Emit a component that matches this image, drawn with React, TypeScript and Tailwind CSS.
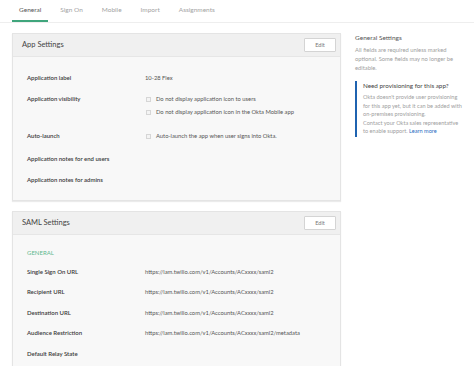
import React from "react";

const Row = ({ label, children, mt }: { label: string; children?: React.ReactNode; mt: string }) => (
  <div className={`flex ${mt}`}>
    <div className="w-[118px] shrink-0 font-semibold text-[#3a3a3a] leading-[10px]">{label}</div>
    <div className="flex flex-col text-[#555] leading-[10px] text-[5.8px]">{children}</div>
  </div>
);

const Check = ({ text, cls = "" }: { text: string; cls?: string }) => (
  <div className={`flex items-center ${cls}`}>
    <span className="w-[5px] h-[5px] border border-[#d6d6d6] bg-[#f4f4f4] mr-[5px] ml-[1px]" />
    <span>{text}</span>
  </div>
);

const Panel = ({ title, children }: { title: string; children: React.ReactNode }) => (
  <div className="border border-[#e4e4e4] bg-[#f8f8f8] shadow-[0_1px_1px_rgba(0,0,0,0.08)]">
    <div className="h-[23px] bg-[#f0f0f0] border-b border-[#e6e6e6] flex items-center justify-between pl-[9px] pr-[4px]">
      <span className="text-[7.5px] text-[#444]">{title}</span>
      <button className="w-[32px] h-[14px] bg-white border border-[#d4d4d4] text-[5.5px] text-[#777] rounded-[1px]">Edit</button>
    </div>
    {children}
  </div>
);

export default function App() {
  const tabs = ["General", "Sign On", "Mobile", "Import", "Assignments"];
  const provLines = [
    "Okta doesn't provide user provisioning",
    "for this app yet, but it can be added with",
    "on-premises provisioning.",
    "Contact your Okta sales representative",
  ];
  return (
    <div className="w-[474px] h-[366px] overflow-hidden bg-white" style={{ fontFamily: "Lato, 'Open Sans', sans-serif" }}>
      <div className="h-[23px] border-b border-[#eeeeee] flex pl-[12px] gap-[5px]">
        {tabs.map((t, i) => (
          <div
            key={t}
            className={`px-[7px] pt-[6px] text-[6.5px] leading-[8px] ${i === 0 ? "text-[#555] border-b-2 border-[#3fa57c]" : "text-[#a3a3a3]"}`}
          >
            {t}
          </div>
        ))}
      </div>
      <div className="flex pl-[12px] pt-[10px] gap-[14px]">
        <div className="w-[329px] shrink-0 flex flex-col gap-[10px]">
          <Panel title="App Settings">
            <div className="px-[14px] pt-[16px] pb-[15px] text-[6px]">
              <Row label="Application label" mt="">
                <span>10-28 Flex</span>
              </Row>
              <Row label="Application visibility" mt="mt-[11px]">
                <Check text="Do not display application icon to users" />
                <Check text="Do not display application icon in the Okta Mobile app" cls="mt-[3px]" />
              </Row>
              <Row label="Auto-launch" mt="mt-[14px]">
                <Check text="Auto-launch the app when user signs into Okta." />
              </Row>
              <Row label="Application notes for end users" mt="mt-[13px]" />
              <Row label="Application notes for admins" mt="mt-[11px]" />
            </div>
          </Panel>
          <Panel title="SAML Settings">
            <div className="px-[14px] pt-[13px] pb-[20px] text-[6px]">
              <div className="text-[#5fb88f] leading-[10px]">GENERAL</div>
              <Row label="Single Sign On URL" mt="mt-[9px]">
                <span>https://iam.twilio.com/v1/Accounts/ACxxxx/saml2</span>
              </Row>
              <Row label="Recipient URL" mt="mt-[10.4px]">
                <span>https://iam.twilio.com/v1/Accounts/ACxxxx/saml2</span>
              </Row>
              <Row label="Destination URL" mt="mt-[10.4px]">
                <span>https://iam.twilio.com/v1/Accounts/ACxxxx/saml2</span>
              </Row>
              <Row label="Audience Restriction" mt="mt-[10.4px]">
                <span>https://iam.twilio.com/v1/Accounts/ACxxxx/saml2/metadata</span>
              </Row>
              <Row label="Default Relay State" mt="mt-[10.4px]" />
            </div>
          </Panel>
        </div>
        <div className="w-[112px] shrink-0">
          <div className="text-[6.5px] text-[#555] leading-[9px]">General Settings</div>
          <div className="w-[100px] mt-[3px] text-[5.8px] text-[#a0a0a0] leading-[9px]">
            All fields are required unless marked optional. Some fields may no longer be editable.
          </div>
          <div className="mt-[9px] border-l-2 border-[#1f63b0] pl-[6px] py-[1px]">
            <div className="text-[6.3px] text-[#444] leading-[8px]">Need provisioning for this app?</div>
            <div className="mt-[3px] text-[5.6px] text-[#a0a0a0] leading-[8.5px]">
              {provLines.map((l) => (
                <div key={l} className="whitespace-nowrap">{l}</div>
              ))}
              <div className="whitespace-nowrap">
                to enable support. <span className="text-[#2a6bc0]">Learn more</span>
              </div>
            </div>
          </div>
        </div>
      </div>
    </div>
  );
}
